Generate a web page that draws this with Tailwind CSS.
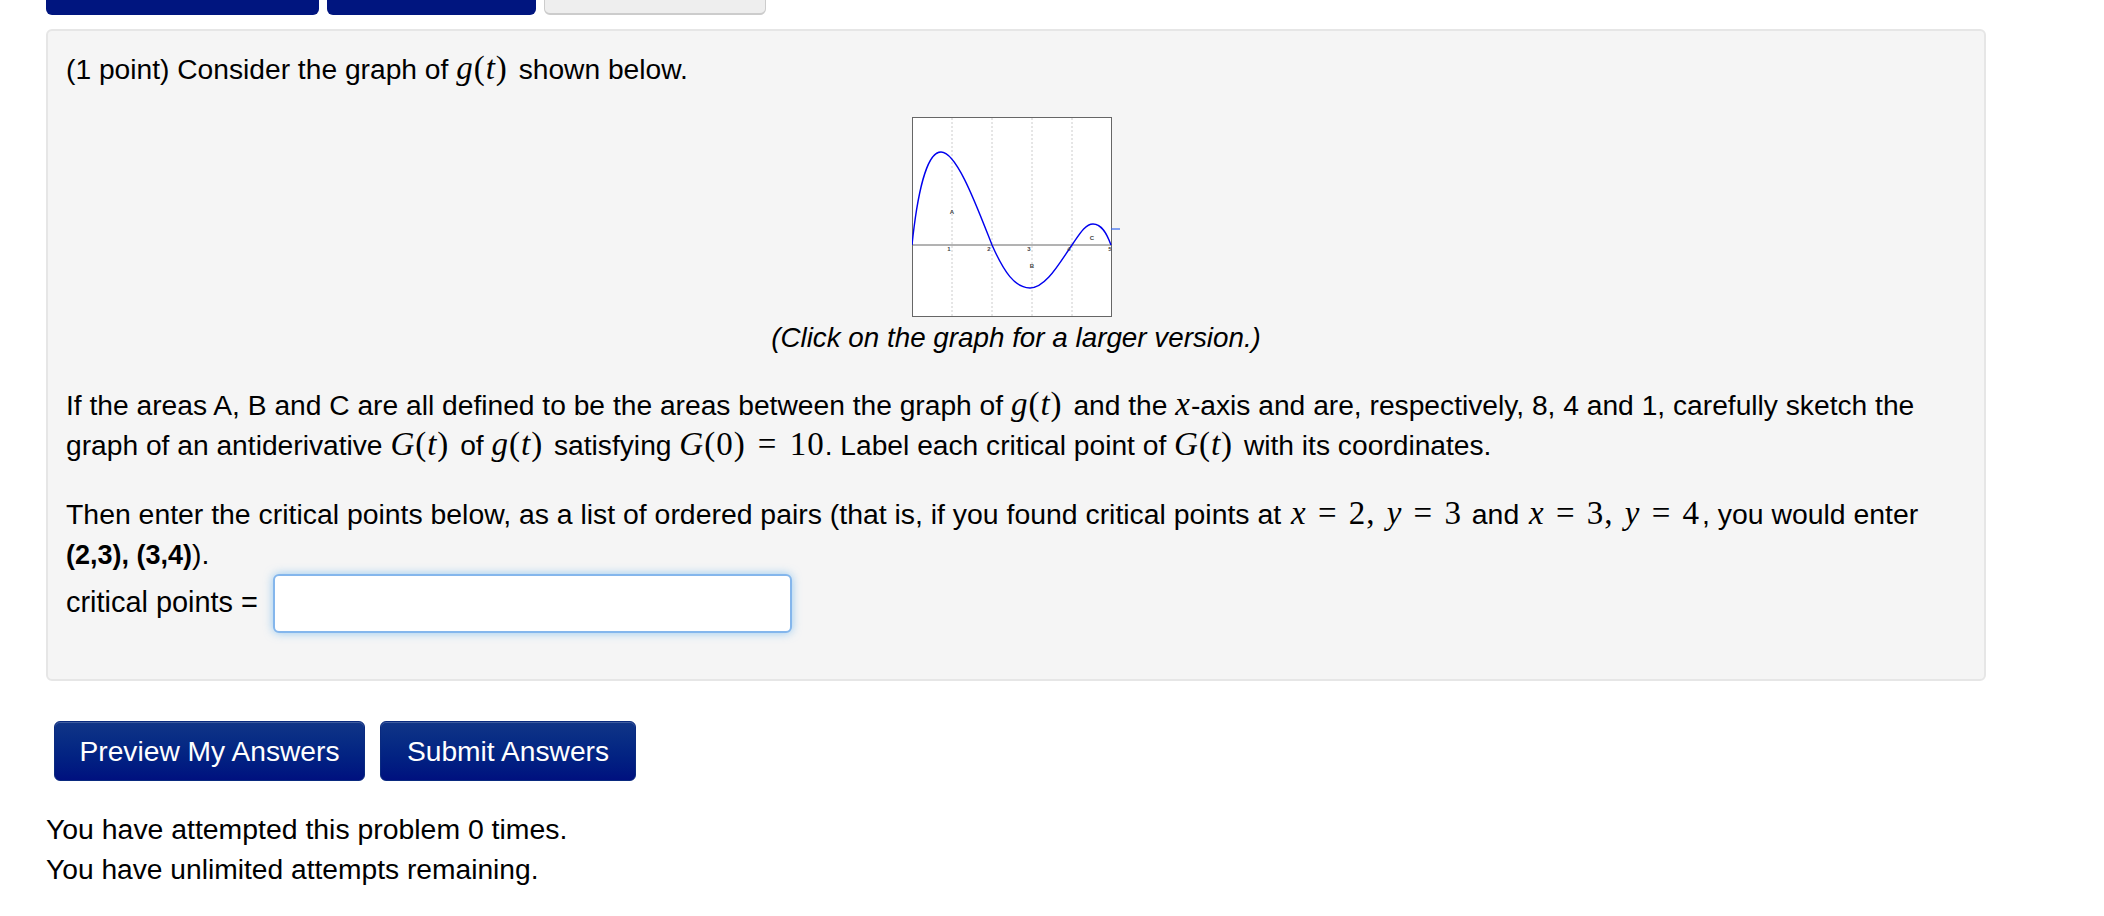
<!DOCTYPE html>
<html lang="en">
<head>
<meta charset="UTF-8">
<title>Problem</title>
<script src="https://cdn.jsdelivr.net/npm/@tailwindcss/browser@4"></script>
</head>
<body class="bg-white text-black font-['Liberation_Sans',Arial,sans-serif] text-[28.2px] leading-[40px] overflow-hidden">
<div class="pl-[46px] w-[1986px]">
  <!-- top buttons, cut off by the screenshot -->
  <div class="flex gap-2 h-[15px]">
    <div class="w-[273px] bg-[#00157f] rounded-b-md"></div>
    <div class="w-[209px] bg-[#00157f] rounded-b-md"></div>
    <div class="w-[222px] bg-[#eeeeee] border border-t-0 border-[#cccccc] border-b-2 rounded-b-md"></div>
  </div>

  <!-- problem well -->
  <div class="mt-[14px] h-[652px] bg-[#f5f5f5] border-2 border-[#e6e6e6] rounded-md pt-[18px] px-[18px]">
    <p>(1 point) Consider the graph of <span class="font-['Liberation_Serif',serif] text-[33px] leading-[0] tracking-[0.03em] mr-[3px]"><i>g</i>(<i>t</i>)</span> shown below.</p>

    <div class="flex justify-center mt-[28px]">
      <svg class="block" width="208" height="200" viewBox="0 0 208 200">
        <rect x="0.5" y="0.5" width="199" height="199" fill="#ffffff" stroke="#666666"/>
        <g stroke="#cccccc" stroke-dasharray="2 2" fill="none">
          <path d="M40 1V199"/>
          <path d="M80 1V199"/>
          <path d="M120 1V199"/>
          <path d="M160 1V199"/>
        </g>
        <path d="M0 128H199" stroke="#666666" fill="none"/>
        <path d="M0 128C5 80 14 35 29 35C45 35 65 90 80 128C92 155 103 171 118 171C134 171 148 145 160 128C167 118 173 107 181 107C190 107 195 117 199 128" stroke="#0000ee" stroke-width="1.4" fill="none"/>
        <path d="M199 112H208" stroke="#3366ee" stroke-width="1.2"/>
        <g font-family="'Liberation Sans',sans-serif" font-size="6" font-weight="bold" fill="#444444" text-anchor="middle">
          <text x="37" y="134">1</text>
          <text x="77" y="134">2</text>
          <text x="117" y="134">3</text>
          <text x="157" y="134">4</text>
          <text x="198" y="134">5</text>
          <text x="40" y="97">A</text>
          <text x="120" y="151">B</text>
          <text x="180" y="123">C</text>
        </g>
      </svg>
    </div>

    <p class="text-center italic text-[27.8px] h-[40px] pt-[1px]">(Click on the graph for a larger version.)</p>

    <p class="mt-[28px]">If the areas A, B and C are all defined to be the areas between the graph of <span class="font-['Liberation_Serif',serif] text-[33px] leading-[0] tracking-[0.03em] mr-[3px]"><i>g</i>(<i>t</i>)</span> and the <i class="font-['Liberation_Serif',serif] text-[33px] leading-[0] tracking-[0.03em]">x</i>-axis and are, respectively, 8, 4 and 1, carefully sketch the<br>
    graph of an antiderivative <span class="font-['Liberation_Serif',serif] text-[33px] leading-[0] tracking-[0.03em] mr-[3px]"><i>G</i>(<i>t</i>)</span> of <span class="font-['Liberation_Serif',serif] text-[33px] leading-[0] tracking-[0.03em] mr-[3px]"><i>g</i>(<i>t</i>)</span> satisfying <span class="font-['Liberation_Serif',serif] text-[33px] leading-[0] tracking-[0.03em] [word-spacing:3px]"><i>G</i>(0) = 10</span>. Label each critical point of <span class="font-['Liberation_Serif',serif] text-[33px] leading-[0] tracking-[0.03em] mr-[3px]"><i>G</i>(<i>t</i>)</span> with its coordinates.</p>

    <p class="mt-[29px] text-[28.4px]">Then enter the critical points below, as a list of ordered pairs (that is, if you found critical points at <span class="font-['Liberation_Serif',serif] text-[33px] leading-[0] tracking-[0.03em] mx-[2px] [word-spacing:2px]"><i>x</i> = 2, <i>y</i> = 3</span> and <span class="font-['Liberation_Serif',serif] text-[33px] leading-[0] tracking-[0.03em] mx-[2px] [word-spacing:2px]"><i>x</i> = 3, <i>y</i> = 4</span>, you would enter<br>
    <b class="text-[27px]">(2,3), (3,4)</b>).</p>

    <div class="flex items-start gap-[15px]">
      <span class="pt-[7px] text-[28.9px]">critical points =</span>
      <input type="text" class="w-[519px] h-[59px] -mt-[1px] bg-white border-2 border-[#84b6ec] rounded-md shadow-[0_0_10px_rgba(82,168,236,0.6)] outline-none">
    </div>
  </div>

  <!-- answer buttons -->
  <div class="flex gap-[15px] mt-[40px] ml-2">
    <button class="w-[311px] h-[60px] rounded-md text-white bg-gradient-to-b from-[#113587] to-[#00107f] border border-[#0a2a7f] shadow-[inset_0_1px_0_rgba(255,255,255,0.2)]">Preview My Answers</button>
    <button class="w-[256px] h-[60px] rounded-md text-white bg-gradient-to-b from-[#113587] to-[#00107f] border border-[#0a2a7f] shadow-[inset_0_1px_0_rgba(255,255,255,0.2)]">Submit Answers</button>
  </div>

  <p class="mt-[28px] text-[28.4px]">You have attempted this problem 0 times.</p>
  <p>You have unlimited attempts remaining.</p>
</div>
</body>
</html>
